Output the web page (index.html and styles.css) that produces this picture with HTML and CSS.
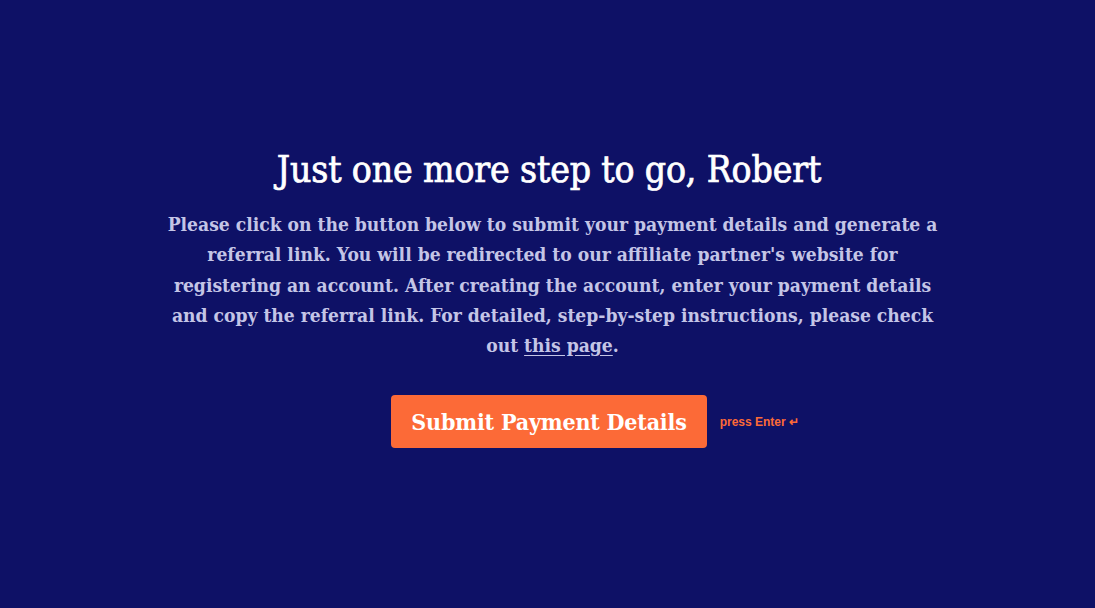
FILE: index.html
```html
<!DOCTYPE html>
<html lang="en">
<head>
<meta charset="utf-8">
<title>Just one more step</title>
<link rel="stylesheet" href="styles.css">
</head>
<body>
<main class="screen">
  <section class="content">
    <h1 class="title">Just one more step to go, Robert</h1>
    <p class="desc">Please click on the button below to submit your payment details and generate a<br>referral link. You will be redirected to our affiliate partner's website for<br>registering an account. After creating the account, enter your payment details<br>and copy the referral link. For detailed, step-by-step instructions, please check<br>out <a class="link" href="#">this page</a>.</p>
    <div class="actions">
      <span class="spacer"></span>
      <button class="submit" type="button">Submit Payment Details</button>
      <span class="hint">press Enter ↵</span>
    </div>
  </section>
</main>
</body>
</html>
```
FILE: styles.css
```css
html, body {
  margin: 0;
  padding: 0;
  height: 100%;
}
body {
  background: #0e1166;
  font-family: "DejaVu Serif Condensed", "DejaVu Serif", serif;
}
.screen {
  height: 608px;
  display: flex;
  flex-direction: column;
  align-items: center;
  padding-top: 146px;
  box-sizing: border-box;
}
.content {
  width: 800px;
  display: flex;
  flex-direction: column;
  align-items: center;
}
.title {
  margin: 0 0 0 3px;
  color: #ffffff;
  font-size: 37px;
  font-weight: normal;
  line-height: 48px;
  letter-spacing: -0.15px;
  text-align: center;
  -webkit-text-stroke: 0.7px #ffffff;
}
.desc {
  margin: 16px 0 0 10px;
  color: #c4c5e6;
  font-size: 19.1px;
  font-weight: bold;
  line-height: 30.3px;
  text-align: center;
  white-space: nowrap;
}
.link {
  color: inherit;
  text-decoration: underline;
  text-underline-offset: 3px;
}
.actions {
  margin-top: 34px;
  padding-left: 3px;
  width: 100%;
  box-sizing: border-box;
  display: grid;
  grid-template-columns: 1fr auto 1fr;
  align-items: center;
}
.submit {
  grid-column: 2;
  height: 53px;
  padding: 0 20px;
  border: none;
  border-radius: 4px;
  background: #fc6a37;
  color: #ffffff;
  font-family: "DejaVu Serif Condensed", "DejaVu Serif", serif;
  font-size: 23px;
  font-weight: bold;
  letter-spacing: -0.2px;
  cursor: pointer;
}
.hint {
  grid-column: 3;
  justify-self: start;
  margin-left: 13px;
  color: #fc6a37;
  font-family: "Liberation Sans", Arial, sans-serif;
  font-size: 12px;
  font-weight: bold;
}
```
